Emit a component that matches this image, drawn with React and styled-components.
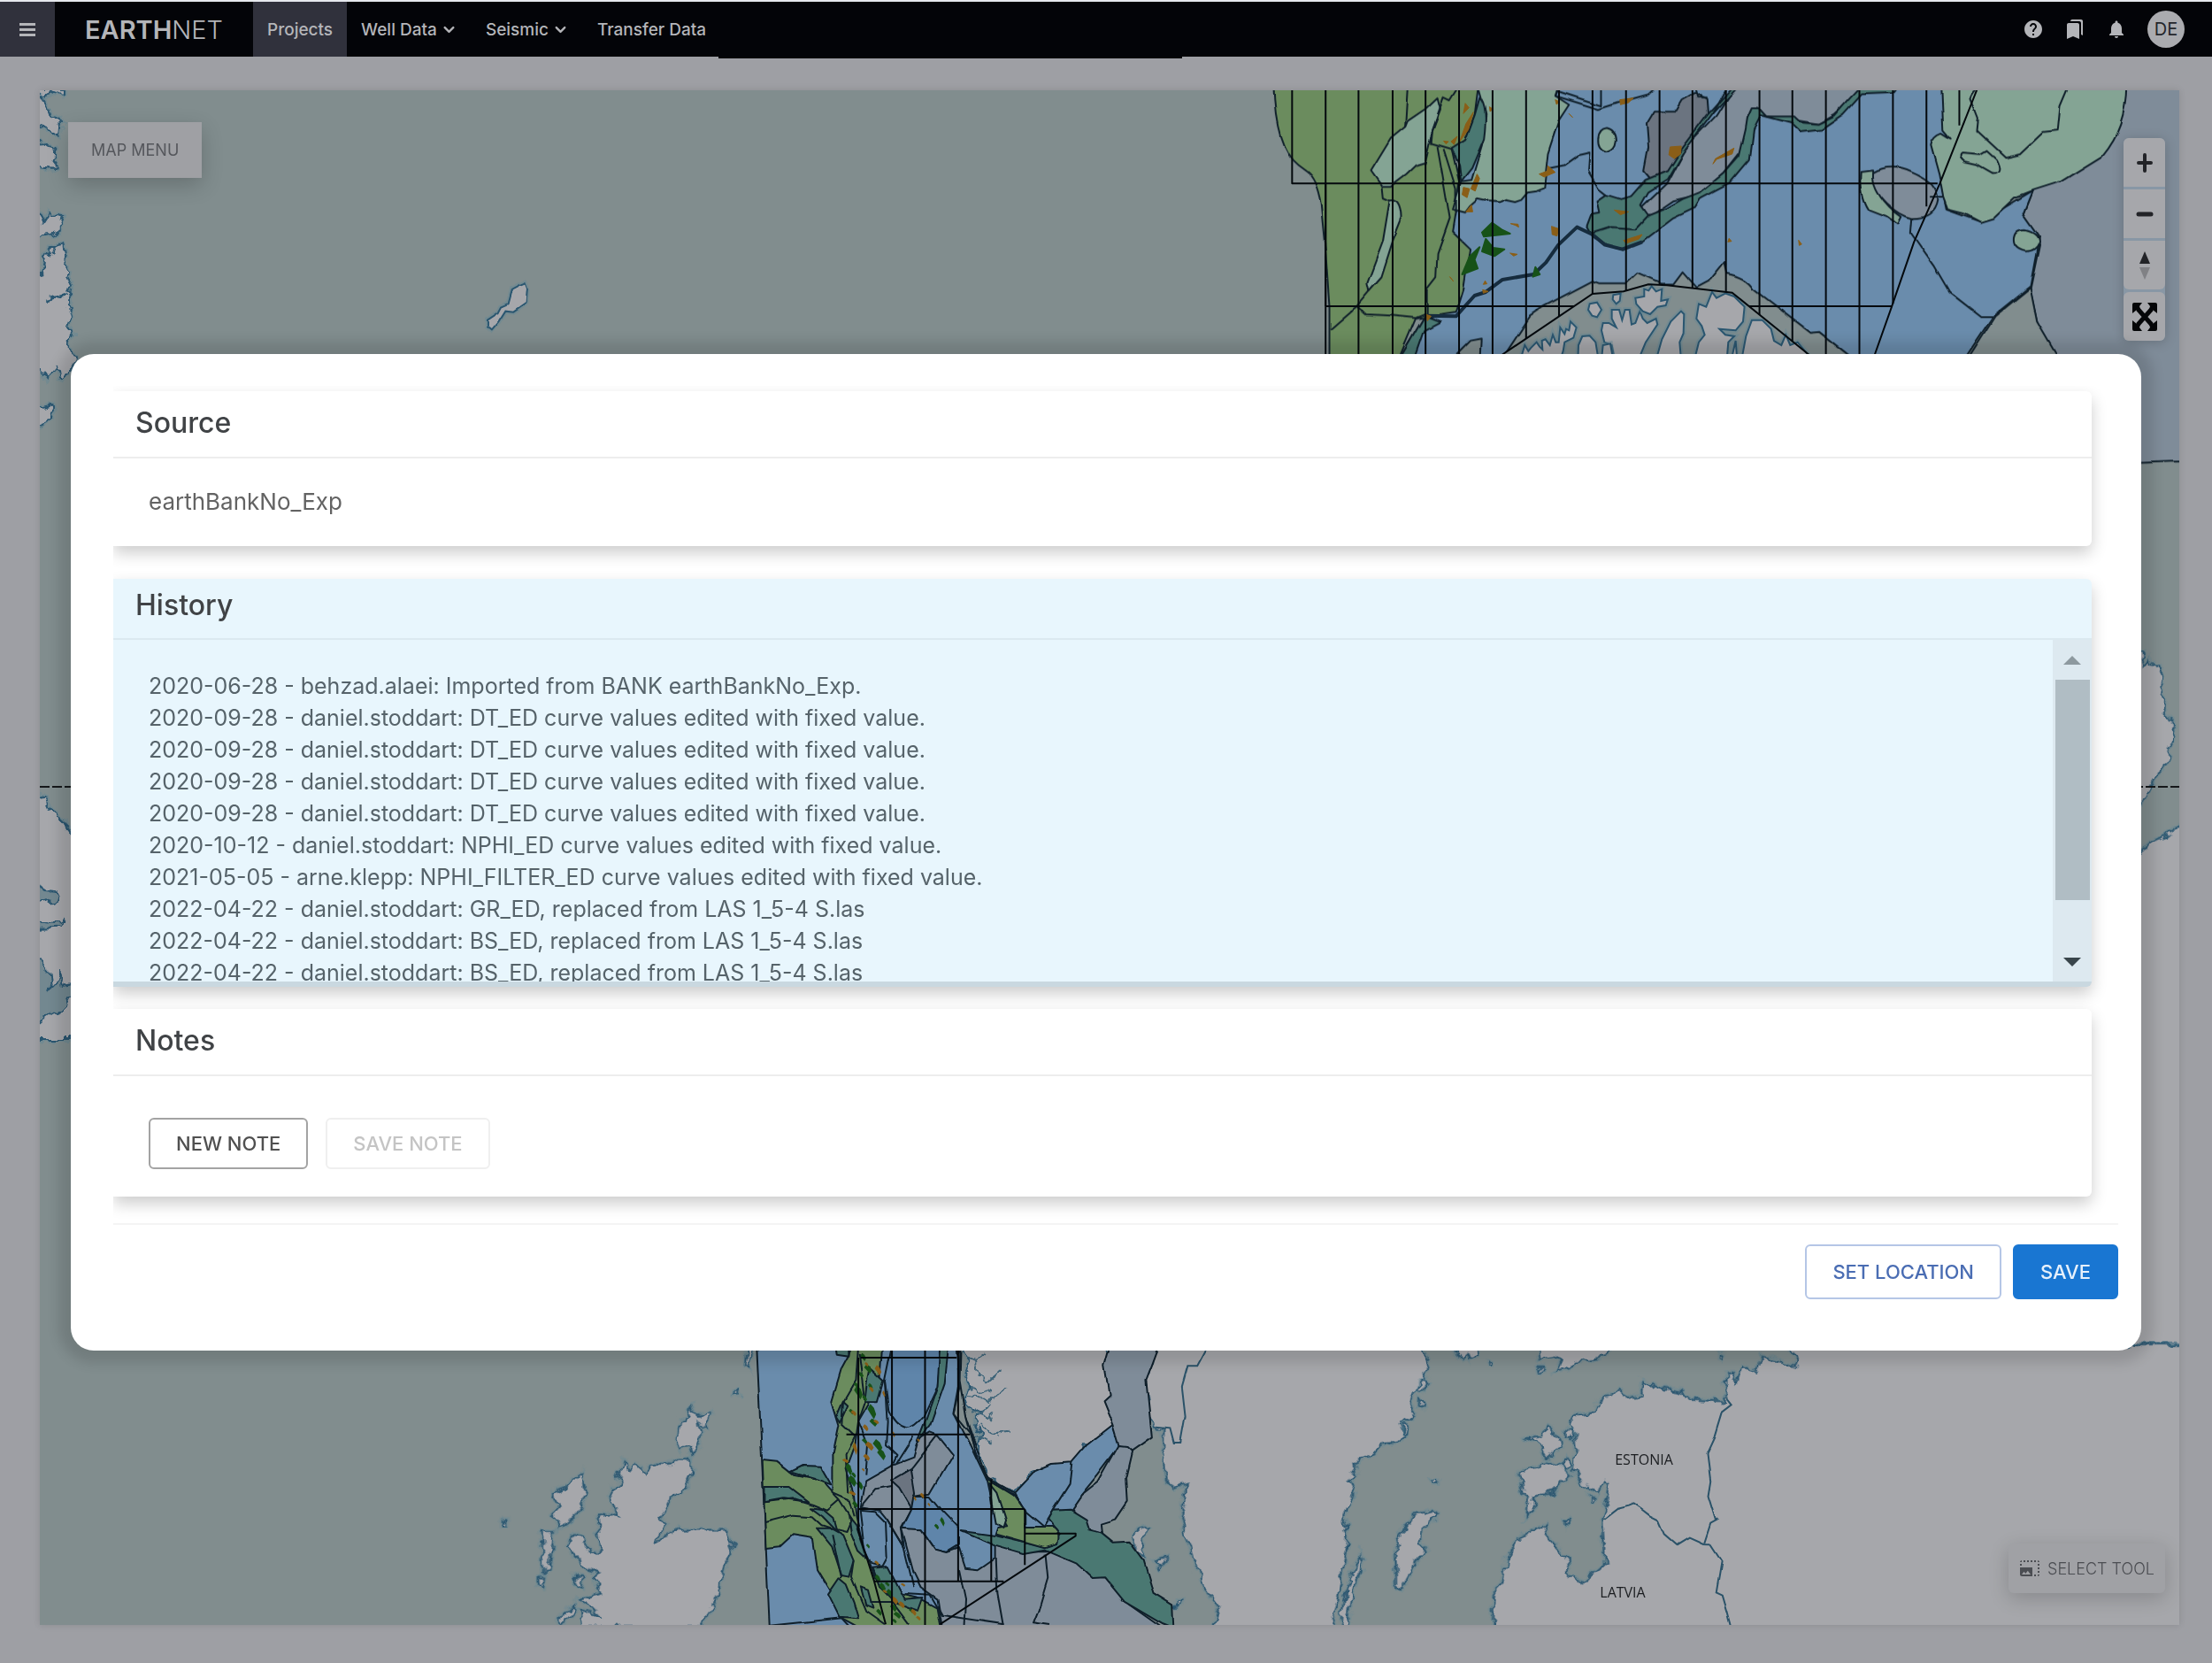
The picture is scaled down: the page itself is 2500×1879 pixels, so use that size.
import React from 'react'
import styled, { createGlobalStyle } from 'styled-components'
import {
    MdHelp,
    MdBookmarks,
    MdNotifications,
    MdPhotoSizeSelectLarge
} from 'react-icons/md'
import { FiChevronDown } from 'react-icons/fi'

const GlobalStyle = createGlobalStyle`
    * {
        box-sizing: border-box;
    }

    body {
        margin: 0;
        background: #9e9fa4;
        font-family: Inter, 'Open Sans', sans-serif;
    }

    button {
        font-family: inherit;
        cursor: pointer;
    }
`

const Page = styled.div`
    position: relative;
    display: flex;
    flex-direction: column;
    min-height: 100vh;
`

const Header = styled.header`
    position: relative;
    display: flex;
    align-items: stretch;
    height: 64px;
    border-top: 2px solid #e6e9ee;
    background: #030408;
    color: #b4b5b9;

    &::after {
        content: '';
        position: absolute;
        left: 812px;
        width: 524px;
        top: 62px;
        height: 2px;
        background: #030408;
    }
`

const BurgerButton = styled.button`
    display: flex;
    flex-direction: column;
    align-items: center;
    justify-content: center;
    gap: 3px;
    width: 62px;
    border: 0;
    background: #30313c;

    span {
        width: 18px;
        height: 3px;
        background: #b4b5b9;
    }
`

const Logo = styled.a`
    display: flex;
    align-items: center;
    justify-content: center;
    width: 224px;
    color: #b4b5b9;
    font-size: 29px;
    font-weight: 600;
    text-decoration: none;

    span {
        font-weight: 300;
    }
`

const Nav = styled.nav`
    display: flex;
    flex: 1;
`

const NavItem = styled.button`
    display: flex;
    align-items: center;
    gap: 4px;
    padding: 0 16px;
    border: 0;
    background: ${props => (props.$active ? '#30313c' : 'transparent')};
    color: #b4b5b9;
    font-size: 19px;
    font-weight: 500;

    svg {
        stroke-width: 3;
    }
`

const HeaderActions = styled.div`
    display: flex;
    align-items: center;
    gap: 23px;
    padding-right: 31px;
`

const IconButton = styled.button`
    display: flex;
    padding: 0;
    border: 0;
    background: none;
    color: #b4b5b9;
    font-size: 24px;
`

const Avatar = styled.button`
    width: 42px;
    height: 42px;
    padding: 0;
    border: 0;
    border-radius: 50%;
    background: #aaabaf;
    color: #24262b;
    font-size: 20px;
`

const Main = styled.main`
    display: flex;
    flex: 1;
    padding: 38px 37px 43px 45px;
`

const MapArea = styled.section`
    position: relative;
    flex: 1;
    overflow: hidden;
    background: #818d8e;
    box-shadow: 0 0 8px rgba(0, 0, 0, 0.12);
`

const MapDrawing = styled.svg`
    position: absolute;
    inset: 0;
    width: 100%;
    height: 100%;

    path,
    ellipse {
        vector-effect: non-scaling-stroke;
    }
`

const MapMenuButton = styled.button`
    position: absolute;
    top: 36px;
    left: 32px;
    height: 63px;
    padding: 0 26px;
    border: 0;
    background: #9fa0a4;
    color: #55575c;
    font-size: 18px;
    box-shadow: 0 8px 24px rgba(0, 0, 0, 0.2);
`

const MapControls = styled.div`
    position: absolute;
    top: 54px;
    right: 16px;
    display: flex;
    flex-direction: column;
    gap: 3px;
    border-radius: 6px;
    background: #8897a5;
    box-shadow: 0 2px 14px rgba(0, 0, 0, 0.2);
`

const MapControl = styled.button`
    display: flex;
    align-items: center;
    justify-content: center;
    width: 47px;
    height: 55px;
    padding: 0;
    border: 0;
    border-radius: ${props => props.$radius || '0'};
    background: #a6a7ab;
`

const SelectToolButton = styled.button`
    position: absolute;
    right: 16px;
    bottom: 36px;
    display: flex;
    align-items: center;
    gap: 8px;
    height: 56px;
    padding: 0 12px;
    border: 0;
    border-radius: 6px;
    background: #a0a1a5;
    color: #4b4d52;
    font-size: 18px;
    font-weight: 300;
    box-shadow: 0 6px 22px rgba(0, 0, 0, 0.18);

    svg {
        font-size: 24px;
    }
`

const Overlay = styled.div`
    position: absolute;
    inset: 0;
    padding: 400px 80px 0;
`

const Dialog = styled.div`
    padding: 36px 26px 58px 48px;
    border-radius: 26px;
    background: #fff;
    box-shadow: 0 0 14px 14px rgba(0, 0, 0, 0.12);
`

const DialogBody = styled.div`
    display: flex;
    flex-direction: column;
    overflow: hidden;
    padding: 6px 30px 30px 0;
    border-bottom: 2px solid #f4f4f4;
`

const Card = styled.section`
    margin-bottom: ${props => props.$gap || '0'};
    border-radius: 0 6px 6px 0;
    background: ${props => (props.$highlight ? '#e8f6fd' : '#fff')};
    border-bottom: ${props => (props.$highlight ? '6px solid #c9d8e0' : '0')};
    box-shadow: 0 8px 18px rgba(0, 0, 0, 0.2);
`

const CardTitle = styled.h2`
    margin: 0;
    padding: ${props => (props.$highlight ? '12px 25px 19px' : '18px 25px 20px')};
    border-bottom: 2px solid ${props => (props.$highlight ? '#dbe9f0' : '#ededed')};
    color: #404346;
    font-size: 32px;
    font-weight: 500;
    line-height: 36px;
`

const CardText = styled.p`
    margin: 0;
    padding: 31px 40px 32px;
    color: #636363;
    font-size: 26px;
    line-height: 36px;
`

const HistoryPane = styled.div`
    display: flex;
    height: 386px;
`

const HistoryList = styled.ul`
    flex: 1;
    overflow: hidden;
    margin: 0;
    padding: 34px 40px 0;
    list-style: none;
    color: #56636a;
    font-size: 25px;
    line-height: 36px;
`

const ScrollTrack = styled.div`
    display: flex;
    flex-direction: column;
    align-items: center;
    width: 44px;
    background: #dde9f0;
`

const ScrollArrow = styled.button`
    display: flex;
    align-items: center;
    justify-content: center;
    width: 40px;
    height: 45px;
    padding: 0;
    border: 0;
    background: none;
`

const ScrollThumb = styled.div`
    width: 39px;
    height: 249px;
    margin-bottom: auto;
    background: #b0bdc4;
`

const NoteActions = styled.div`
    display: flex;
    gap: 20px;
    padding: 47px 40px 31px;
`

const Button = styled.button`
    height: ${props => (props.$large ? '62px' : '58px')};
    padding: 0 29px;
    border: 2px solid ${props => props.$border || 'transparent'};
    border-radius: 6px;
    background: ${props => props.$background || '#fff'};
    color: ${props => props.$color};
    font-size: 22px;
    font-weight: 500;
`

const DialogFooter = styled.footer`
    display: flex;
    justify-content: flex-end;
    gap: 13px;
    padding-top: 22px;
`

const SEA = '#818d8e'
const LAND = '#a6a7ab'
const BLUE = '#6a8cac'
const DEEP = '#5f85aa'
const GREEN = '#6b8c5e'
const TEAL = '#4a7872'
const MINT = '#84a494'
const SLATE = '#7f8c99'
const ROCK = '#6b7480'
const INK = '#0f1f2a'
const OIL = '#175218'
const GAS = '#8a5e17'

// each sheet of the map is drawn on its own grid
const NORTH = 'translate(1400 80) scale(.7015 .3333)'
const COAST = 'translate(1640 290) scale(.3333)'
const SOUTH = 'translate(550 1500) scale(.5421 .3333)'
const BALTIC = 'translate(1280 1500) scale(.5421 .3333)'
const WEST = 'translate(40 100) scale(.3333 .7015)'
const ISLAND = 'translate(0 80) scale(.4464 .3333)'
const EAST = 'translate(2200 600) scale(.3333 .3827)'

const westLand = [
    'M0 0 L90 0 L90 12 L75 12 L50 8 L0 15Z',
    'M0 10 L15 18 L45 40 L80 48 Q88 60 80 75 L60 70 L0 60Z',
    'M0 80 L35 95 L70 98 L60 128 L0 125Z',
    'M0 190 L30 215 L50 200 L60 205 L90 205 L75 230 L50 235 L0 240Z',
    'M0 300 L25 297 L30 280 L60 255 L100 250 L105 270 L100 278 L112 290 L106 300 L120 318 L112 328 L118 345 L110 350 L120 370 L112 380 L120 400 L110 408 L122 425 L140 438 L115 460 L95 468 L80 465 L70 448 L55 452 L40 465 L25 455 L0 440Z',
    'M0 515 L50 508 L68 512 L50 535 L0 545Z',
    'M0 1134 L35 1145 L50 1162 L75 1168 L105 1195 L140 1198 L140 1531 L0 1531Z'
]

const westInlets = [
    'M0 1282 L40 1290 L75 1292 L65 1308 L0 1315Z',
    'M0 1342 L90 1345 L100 1333 L98 1352 L0 1354Z',
    'M0 1395 L45 1420 L55 1450 L75 1440 L85 1420 L92 1445 L140 1440 L110 1470 L90 1490 L60 1485 L0 1508Z',
    'M40 340 L100 335 L104 337 L42 342Z'
]

const scotland = [
    'M285 455 L300 485 L310 465 L330 490 L345 465 L380 465 L400 445 L427 450 L425 500 L410 550 L385 580 L360 640 L375 660 L345 735 L400 685 L500 685 L515 740 L497 790 L485 900 L465 960 L440 1020 L200 1020 L195 960 L235 980 L200 920 L235 900 L225 850 L240 830 L200 810 L188 770 L165 750 L185 700 L200 720 L215 760 L240 760 L230 650 L255 630 L275 640 L258 545 L275 540Z',
    'M200 485 L208 560 L185 640 L150 680 L138 640 L155 610 L140 560 L165 545Z',
    'M115 690 L140 690 L130 830 L118 835 L118 740Z',
    'M430 265 L440 300 L468 280 L460 340 L440 320 L445 380 L430 430 L425 400 L405 415 L398 385 L402 320 L420 310Z',
    'M545 60 L555 60 L548 140 L540 130Z',
    'M185 935 L185 955 L160 1000 L150 985Z',
    'M518 215 L526 215 L526 232 L518 232Z',
    'M33 652 L41 652 L41 668 L33 668Z',
    'M110 850 L120 850 L118 878 L110 872Z',
    'M180 845 L200 850 L198 878 L188 870Z'
]

const norway =
    'M985 60 L1290 60 L1310 340 L1250 400 L1220 460 L1140 490 L1100 560 L1045 500 L1020 390 L1035 360 L1015 330 L1030 290 L1000 260 L1008 200 L995 150 L1005 110Z'

const fjords =
    'M1000 100 L1020 115 L1040 90 M1020 115 L1025 160 L1045 180 L1068 150 M1005 240 L1040 245 L1085 215 M1030 290 L1050 250 M1010 280 L1050 310 L1060 280 M1025 330 L1060 360 L1088 350 M1020 370 L1045 380 L1058 398 M1010 200 L1025 230 L1048 210'

const baltic = [
    'M60 60 L25 180 L35 310 L40 340 L65 345 L65 420 L70 520 L90 545 L110 535 L110 590 L100 640 L110 700 L130 790 L150 880 L185 950 L168 1020 L168 1060 L412 1060 L412 1020 L425 930 L440 820 L450 700 L440 650 L460 560 L450 530 L465 500 L460 460 L500 430 L520 395 L545 390 L570 370 L560 330 L590 290 L575 250 L600 200 L618 140 L600 60Z',
    'M748 1060 L755 890 L775 850 L780 780 L800 715 L860 672 L865 710 L905 780 L912 850 L940 865 L985 800 L980 650 L995 530 L985 520 L965 555 L938 530 L920 480 L925 420 L918 330 L925 295 L960 285 L965 260 L985 240 L1000 235 L1015 210 L1035 235 L1060 225 L1065 185 L1080 205 L1090 195 L1105 205 L1145 215 L1165 245 L1235 250 L1240 155 L1250 155 L1260 185 L1270 135 L1300 150 L1310 98 L1385 130 L1390 105 L1370 76 L1370 60 L2300 60 L2300 1060Z',
    'M845 60 L850 105 L880 95 L895 105 L885 150 L905 145 L920 110 L985 100 L1003 60Z',
    'M660 60 L690 105 L700 90 L705 110 L722 95 L715 60Z',
    'M625 620 L635 630 L605 680 L600 730 L608 760 L590 800 L560 885 L550 870 L548 740 L570 670 L590 635Z',
    'M475 770 L480 790 L455 920 L445 1060 L430 1060 L440 920Z',
    'M825 375 L855 370 L865 338 L880 355 L893 400 L860 445 L848 400Z',
    'M808 490 L825 480 L860 460 L895 460 L913 500 L875 560 L835 570 L835 610 L822 640 L825 570 L810 555Z',
    'M898 348 L918 350 L915 372 L898 370Z',
    'M905 440 L917 465 L910 485 L895 465Z',
    'M622 515 L635 515 L635 530 L625 530Z',
    'M741 112 L751 112 L750 128 L742 128Z',
    'M847 132 L856 132 L856 145 L849 145Z',
    'M1223 92 L1231 95 L1228 110 L1222 106Z',
    'M954 572 L962 575 L960 592 L954 590Z',
    'M902 655 L910 658 L909 673 L903 672Z',
    'M44 790 L68 778 L68 792 L55 815Z',
    'M90 925 L102 922 L98 940 L90 942Z',
    'M0 700 L20 675 L32 680 L22 720 L25 780 L0 740Z',
    'M598 190 L610 195 L605 215 L596 210Z',
    'M600 245 L608 250 L606 268 L599 264Z',
    'M568 330 L576 335 L572 362 L566 358Z'
]

const borders = [
    'M158 60 L135 130 L115 130 L103 200 L110 300 L100 390 L88 390 L80 340 L50 335',
    'M982 650 L1010 615 L1035 605 L1045 598 L1060 615 L1080 640 L1098 655 L1110 700 L1135 735 L1160 710 L1190 732 L1205 733',
    'M1238 240 L1250 265 L1230 290 L1215 370 L1198 430 L1205 520 L1200 570 L1215 650 L1222 650 L1205 665 L1192 730',
    'M1205 733 L1228 790 L1217 895 L1230 905 L1240 960 L1250 1020'
]

const eastLand = [
    'M600 355 L660 355 L670 395 L685 378 L705 405 L720 402 L735 430 L725 480 L745 500 L740 550 L765 555 L772 590 L760 630 L755 670 L695 745 L655 805 L600 810Z',
    'M600 1000 L655 970 L690 915 L740 900 L770 885 L850 840 L850 2400 L600 2400Z'
]

const northZones = [
    [SLATE, 'M1132 50 L1700 50 L1700 1320 L1500 1325 L1440 1330 L1330 1100 L1286 850 L1275 740 L1290 590 L1265 485 L1280 405Z'],
    [BLUE, 'M384 50 L1132 50 L1145 230 L1130 370 L1140 470 L1195 512 L1280 405 L1265 485 L1290 560 L1275 730 L1215 832 L1165 990 L255 990 L300 830Z'],
    [SEA, 'M1275 735 L1218 832 L1170 990 L1325 990 L1286 850Z'],
    [SLATE, 'M800 50 L770 150 L720 260 L690 380 L650 460 Q650 490 665 490 L700 440 L740 420 L780 350 L810 270 L822 150 L835 125 L850 155 L890 165 L935 180 L960 150 L990 90 L1005 50Z'],
    [ROCK, 'M735 75 L715 100 L705 135 L670 135 L657 180 L660 260 L653 340 L665 370 L690 345 L720 260 L757 150 L755 95Z'],
    [TEAL, 'M798 50 L755 150 L705 290 L690 340 L655 370 L632 425 L615 435 L592 420 L578 440 L582 480 L570 485 L562 530 L570 560 L590 595 L618 608 L650 580 L700 500 L735 465 L745 430 L790 380 L822 300 L828 200 L840 150 L890 178 L905 208 L940 200 L975 150 L1005 80 L1055 75 L1064 50 L1005 50 L985 95 L960 155 L935 180 L905 175 L895 155 L850 155 L838 127 L825 127 L818 160 L815 200 L805 290 L780 350 L745 410 L715 435 L690 465 L660 490 L648 455 L660 410 L690 370 L715 280 L765 140 L805 50Z'],
    [GREEN, 'M56 50 C58 190 70 280 95 320 L108 340 C122 360 128 400 132 450 L140 620 L146 800 L146 990 L255 990 L285 840 L350 820 L362 740 L372 600 L345 545 L350 480 L355 375 L343 265 L365 235 L380 150 L386 50Z'],
    [MINT, 'M384 50 L390 95 L398 150 L392 250 L375 370 L358 375 L345 470 L365 480 L372 460 L385 435 L400 442 L420 445 L430 435 L445 442 L455 435 L465 410 L480 405 L492 395 L498 280 L515 170 L532 115 L510 85 L515 50Z'],
    [MINT, 'M320 90 L325 130 L312 200 L300 310 L285 320 L270 350 L245 390 L230 390 L213 340 L245 230 L268 190 L272 170 L300 130Z'],
    [MINT, 'M243 440 Q262 430 263 500 L248 580 L230 700 L210 748 L207 720 L232 580Z'],
    [TEAL, 'M388 92 Q402 120 395 230 L375 330 L358 375 L355 320 L343 265 L365 235 L380 150Z'],
    [TEAL, 'M300 830 L325 850 L298 880 L280 990 L255 990Z'],
    [MINT, 'M593 194 Q607 200 607 235 Q605 270 592 273 Q578 265 579 230 Q580 197 593 194Z'],
    [MINT, 'M1132 50 L1135 200 L1147 230 L1132 210 Q1118 220 1115 250 L1128 350 L1135 430 L1142 470 L1170 485 L1195 513 L1215 500 L1250 430 L1280 405 L1325 375 L1390 290 Q1430 190 1430 50Z'],
    [MINT, 'M1268 540 Q1290 550 1290 580 Q1285 615 1268 615 Q1248 605 1250 570 Q1252 540 1268 540Z'],
    [MINT, 'M1003 340 L1022 335 Q1022 430 1068 495 L1062 520 L1045 495 L1015 470 Q1000 420 1003 340Z'],
    [SLATE, 'M1022 345 Q1050 310 1085 345 Q1125 380 1125 440 Q1120 500 1085 500 Q1065 490 1045 450 Q1020 400 1022 345Z'],
    [SEA, 'M420 990 L470 830 L492 798 L570 712 L580 720 L625 720 L642 687 L680 722 L700 722 L715 680 L738 735 L760 710 L783 650 L787 687 Q820 700 830 740 L920 885 L935 882 L1000 990Z'],
    [SEA, 'M350 962 L372 915 L390 908 L388 990Z']
]

const northLines = [
    'M1195 50 Q1180 70 1178 95 L1190 160 L1188 200 L1235 292 L1260 280 L1295 210 L1318 205 L1322 120 L1336 50',
    'M1165 280 L1195 285 L1205 272 L1220 300 Q1232 350 1215 350 L1190 320 L1170 310 Q1158 290 1165 280Z',
    'M1085 500 L1083 550 L1120 660 L1145 750 L1195 832 L1218 832',
    'M1112 430 L1135 430',
    'M515 62 L510 85 L580 130 L625 100 L660 80 L675 50 M565 50 L585 60 L585 118 L515 70',
    'M500 330 L525 320 L545 290 L565 280 L563 340 L580 400 L592 420 M570 550 L600 530 L640 535 L660 490',
    'M272 50 L268 190 M355 50 L340 100 L330 90 L312 200 L310 245 L343 265 M320 255 L328 350 L340 500 L320 620 L318 700 L303 740 L303 830 M330 265 L350 400 L350 480',
    'M148 875 L190 798 L210 748 M190 798 L205 825 L245 830 L285 838 L300 825 M230 390 L232 430 L243 440',
    'M735 50 L740 90 L755 90 M788 50 L765 140'
]

const coastLand = [
    'M235 350 L250 300 L262 320 L270 310 L290 290 L300 305 L310 315 L308 285 L320 280 L335 300 L345 265 L355 290 L365 290 L370 240 L385 262 L390 245 L400 250 L405 220 L425 240 L415 275 L385 290 L380 320 L370 350Z',
    'M430 350 L432 300 L445 270 L470 268 L490 290 L500 350Z',
    'M520 290 L510 250 L515 225 L535 225 L560 240 L545 210 L545 180 L570 180 L580 215 L590 180 L605 180 L612 230 L625 225 L640 185 L650 210 L665 225 L695 210 L700 230 L660 290 L635 350 L555 350 L545 300Z',
    'M625 140 L655 135 L655 110 L670 115 L680 100 L695 118 L715 110 L712 150 L735 145 L728 165 L700 170 L675 195 L650 185 L628 160Z',
    'M695 350 L715 280 L745 220 L780 185 L790 195 L788 260 L775 290 L780 350Z',
    'M825 350 L840 290 L860 265 L850 235 L832 210 L840 160 L865 170 L885 120 L900 140 L930 125 L960 135 L995 170 L990 220 L965 250 L910 245 L930 265 L960 270 L940 290 L935 350Z',
    'M950 350 L965 285 L970 350Z',
    'M985 350 L1000 270 L1020 215 L1055 215 L1085 245 L1095 285 L1120 300 L1135 265 L1150 300 L1175 290 L1225 350Z',
    'M470 160 L495 155 L510 180 L495 205 L478 200 L465 180Z',
    'M550 130 L575 125 L572 150 L560 160 L548 145Z',
    'M510 350 L515 300 L540 295 L550 350Z'
]

const northGrid = [
    'M86 50 V382 H1126 M140 382 V798 M140 798 H545 M818 798 H1052',
    'M140 50 V990 M193 50 V962 M248 50 V962 M301 50 V962 M355 50 V962 M409 50 V962 M463 50 V915 M516 50 V845',
    'M570 50 V757 M624 50 V748 M678 50 V726 M731 50 V738 M785 50 V750 M839 50 V830 M892 50 V915 M946 50 V962',
    'M1000 50 V962 M1054 50 V790 M1108 50 V460 M1161 50 V185',
    'M1192 50 L1130 380 L1088 580 L1052 800 L1020 990'
]

const southZones = [
    [BLUE, 'M563 60 L985 60 L985 230 L1008 340 L1045 510 L1100 560 L1120 610 L1230 700 L1170 850 L1140 1020 L590 1020Z'],
    [SEA, 'M980 60 L990 60 L988 180 L1000 300 L1020 420 L1045 520 L1010 400 L975 290 L988 200Z'],
    [DEEP, 'M845 60 L948 60 L940 200 L910 305 Q890 345 875 343 Q850 330 838 280 L830 180Z'],
    [SLATE, 'M780 610 L790 520 L850 465 L890 440 L900 380 L925 355 L940 365 L972 430 L925 560 L890 570 L885 620 L865 680 L870 745 L835 650 L820 620Z'],
    [ROCK, 'M843 520 L885 480 L893 560 L885 615 L860 545Z'],
    [DEEP, 'M890 570 L925 570 L950 620 L985 680 L985 740 L960 765 L935 755 L905 685 L865 685 L885 620Z'],
    [SLATE, 'M865 680 L905 685 L935 755 L960 765 L985 750 L998 815 L1025 820 L1060 780 L1060 740 L1120 760 L1200 760 L1290 850 L1340 940 L1410 1020 L950 1020 L940 920 L905 880 L890 830Z'],
    [BLUE, 'M1100 560 L1140 490 L1180 462 L1220 457 L1250 400 L1305 330 L1320 402 L1275 500 L1240 570 L1220 620 L1180 620 L1160 675 L1120 620Z'],
    [SLATE, 'M1300 60 L1288 130 L1298 230 L1285 250 L1305 330 L1318 402 L1345 418 L1387 370 L1375 180 L1387 130 L1403 60Z'],
    [SLATE, 'M1318 402 L1335 405 L1345 420 L1332 510 L1335 590 L1310 650 L1280 665 L1282 695 L1250 680 L1220 617 L1240 570 L1275 525Z'],
    [TEAL, 'M1170 650 L1180 620 L1215 617 L1248 650 L1255 685 L1280 695 L1305 728 L1340 725 L1370 790 L1390 900 L1430 940 L1432 1020 L1410 1006 L1330 930 L1290 850 L1265 852 L1230 800 L1165 755 L1120 768 L1060 740 L990 690 L1060 705 L1165 745 L1195 700Z'],
    [GREEN, 'M1045 515 L1098 565 L1122 620 L1122 675 L1180 675 Q1198 690 1190 735 L1165 748 L1060 700 L1065 675 L1085 670 L1055 590Z'],
    [MINT, 'M1050 530 L1065 560 L1083 650 L1078 675 L1062 660 L1055 600Z'],
    [GREEN, 'M760 60 L825 60 L820 170 L800 250 L775 320 L768 400 L750 480 L765 560 L770 640 L785 740 L810 850 L860 900 L900 915 L940 950 L948 1020 L780 1020 L735 980 L720 900 L690 820 L680 710 L640 700 L610 745 L582 750 L575 450 L605 455 L640 500 L700 520 L722 560 L722 430 L735 330 L720 250 L740 140 L755 95Z'],
    [TEAL, 'M632 490 L660 468 L695 470 L718 535 L680 512Z'],
    [TEAL, 'M580 540 L630 540 L670 590 L620 580 L580 592Z'],
    [TEAL, 'M675 610 L700 615 L722 645 L730 690 L700 640Z'],
    [TEAL, 'M690 680 L720 680 L742 700 L765 790 L755 845 L740 840 L720 740Z'],
    [TEAL, 'M712 905 L735 850 L750 870 L765 930 L775 985 L735 980Z'],
    [TEAL, 'M800 140 L827 180 L815 250 L790 250 L795 180Z'],
    [TEAL, 'M745 245 L755 260 L738 320 L730 300Z'],
    [TEAL, 'M755 640 L770 670 L795 790 L775 760 L760 700Z'],
    [TEAL, 'M805 815 L835 810 L870 920 L910 915 L900 960 L850 930 L820 880Z'],
    [TEAL, 'M780 880 L795 890 L805 950 L790 940Z'],
    [TEAL, 'M727 60 H755 V98 L730 92Z'],
    [TEAL, 'M945 60 L963 60 L955 190 L925 330 L895 400 L912 330 L940 200Z'],
    [BLUE, 'M778 620 L810 625 L832 660 L835 780 L825 810 L800 800 L788 760Z'],
    [BLUE, 'M740 985 L760 1020 L590 1020 L590 1010Z']
]

const southLines = [
    'M580 660 L640 635 L680 640 L700 670 L720 680 M580 592 L640 580 L680 600 L710 620 L735 585 L720 560 L755 585 L765 640 M735 585 L760 650 L750 690 L725 680',
    'M775 60 L770 180 L745 250 L742 330 L768 370 L750 430 L755 560 M778 90 L790 250 L775 320 L795 400 L790 500',
    'M830 180 L835 320 L832 400 L855 435 L845 470 M855 460 L890 370',
    'M780 610 L810 550 L845 540 M835 650 L870 745 L890 880 M940 365 L890 470 L885 480',
    'M985 820 L998 920 L995 1020 M1062 780 L1065 900 L1078 1020 M1165 770 L1170 850 L1150 960 L1140 1000 L1175 1008',
    'M720 700 L740 850 M765 790 L760 845 L790 960 L830 1006 M800 930 L845 930 L880 1006',
    'M988 60 L985 200 L975 290 L1010 360 L1025 450 L1050 520 L1100 570',
    'M1220 457 L1215 530 L1180 620 M870 900 L925 905 L950 975 L1078 1006'
]

const southGrid = [
    'M775 102 V690 M845 60 V1020 M914 60 V1020 M983 60 V860 M1052 515 V860 M1122 615 V805',
    'M780 102 H980 M750 362 H1008 M775 615 H1122 M808 860 H1078 M1122 698 H1228 V706 L945 1006',
    'M775 690 L808 860 L832 1006'
]

const southOil = [
    [785, 100, 6, 14], [795, 140, 8, 16], [775, 220, 9, 24], [800, 200, 5, 12], [803, 285, 9, 26],
    [806, 322, 8, 14], [815, 400, 10, 22], [823, 430, 9, 20], [755, 480, 7, 22], [762, 520, 9, 20],
    [778, 535, 7, 16], [788, 385, 6, 10], [768, 600, 6, 12], [795, 741, 4, 8], [938, 675, 5, 10],
    [950, 658, 5, 16], [815, 850, 6, 14], [825, 880, 7, 16], [840, 900, 7, 14], [818, 965, 6, 12],
    [848, 950, 7, 14], [856, 975, 8, 12], [780, 160, 6, 10], [760, 285, 5, 10], [885, 960, 5, 8],
    [770, 195, 5, 10], [788, 240, 5, 12], [765, 500, 5, 10], [835, 870, 5, 8], [850, 995, 5, 8]
]

const southGas = [
    [816, 145, 7, 18], [802, 210, 5, 10], [828, 225, 3, 12], [765, 290, 6, 10], [790, 340, 6, 12],
    [798, 402, 9, 16], [792, 440, 7, 12], [748, 452, 7, 8], [762, 562, 8, 8], [848, 362, 4, 10],
    [900, 382, 3, 6], [785, 482, 3, 6], [908, 570, 5, 10], [893, 580, 3, 8], [922, 600, 3, 6],
    [813, 798, 5, 8], [868, 872, 5, 6], [850, 925, 8, 14], [865, 940, 7, 12], [890, 965, 6, 12],
    [900, 985, 5, 8], [830, 895, 5, 6], [812, 320, 6, 8], [768, 410, 5, 22], [792, 125, 4, 8]
]

const northOil =
    'M408 515 L425 540 L437 552 L395 562 L392 548Z M398 570 L410 600 L428 605 L412 628 L392 612Z M388 598 L380 640 L385 670 L360 690 L372 630Z M478 665 L485 690 L474 698Z'

const northGas =
    'M365 110 L371 125 L362 145Z M378 140 L370 200 L356 240 L366 180Z M352 222 L347 250 L342 240Z M330 238 L338 240 L334 248Z M404 122 L410 130 L405 138Z M510 98 L517 105 L512 114Z M532 145 L538 158Z M614 98 L636 92 L628 108 L615 115Z M695 258 L713 255 L712 282 L702 298 L693 285Z M798 262 L795 282 L770 300 L764 316 L768 298Z M498 322 L510 344 L492 360 L484 350 L497 340Z M384 350 L388 365 L381 408 L374 400Z M362 395 L372 400 L368 430 L360 420Z M375 455 L377 478 L366 478Z M438 518 L450 520 L451 530 L446 524Z M504 527 L515 535 L513 560 L505 555Z M605 472 L628 478 L615 488Z M620 575 L650 555 L645 570 L624 585Z M790 568 L794 578 L788 580Z M902 574 L907 588 L903 592Z M437 618 L449 622 L443 628Z M340 698 L346 714Z M397 712 L400 722 L394 724Z M393 742 L402 748 L394 754Z M302 826 L310 832 L304 848Z'

const Coastline = ({ paths, transform }) => (
    <g transform={transform}>
        {paths.map(d => (
            <g key={d}>
                <path d={d} fill="none" stroke="#5f8796" strokeWidth="6" strokeOpacity=".4" />
                <path d={d} fill={LAND} stroke="#2a5670" strokeWidth="2" />
            </g>
        ))}
    </g>
)

const Zones = ({ zones, lines, grid, transform }) => (
    <g transform={transform} strokeLinejoin="round">
        {zones.map(([fill, d]) => (
            <path key={d} d={d} fill={fill} stroke={INK} strokeWidth="2" />
        ))}
        {lines.map(d => (
            <path key={d} d={d} fill="none" stroke={INK} strokeWidth="2" />
        ))}
        {grid.map(d => (
            <path key={d} d={d} fill="none" stroke="#04090d" strokeWidth="2" />
        ))}
    </g>
)

const Fields = ({ items, fill }) =>
    items.map(([x, y, rx, ry]) => (
        <path
            key={`${x}-${y}`}
            d={`M${x - rx} ${y - ry / 3} L${x - rx / 3} ${y - ry} L${x + rx / 2} ${y - ry / 2} L${x + rx} ${y + ry / 3} L${x + rx / 2} ${y + ry} L${x - rx / 4} ${y + ry / 3}Z`}
            fill={fill}
        />
    ))

const NorthSeaMap = () => (
    <MapDrawing viewBox="45 102 2418 1734" preserveAspectRatio="none" aria-hidden="true">
        <defs>
            <filter id="rough" filterUnits="userSpaceOnUse" x="0" y="60" width="2520" height="1820" colorInterpolationFilters="sRGB">
                <feTurbulence type="fractalNoise" baseFrequency=".07" numOctaves="3" seed="4" />
                <feDisplacementMap in="SourceGraphic" scale="14" xChannelSelector="R" yChannelSelector="G" />
            </filter>
            <filter id="wavy" filterUnits="userSpaceOnUse" x="0" y="60" width="2520" height="1820" colorInterpolationFilters="sRGB">
                <feTurbulence type="fractalNoise" baseFrequency=".03" numOctaves="1" seed="9" />
                <feDisplacementMap in="SourceGraphic" scale="7" xChannelSelector="R" yChannelSelector="G" />
            </filter>
        </defs>
        <rect x="0" y="60" width="2520" height="1820" fill={SEA} />
        <g filter="url(#rough)">
            <Coastline paths={westLand} transform={WEST} />
            <g transform={WEST}>
                {westInlets.map(d => (
                    <path key={d} d={d} fill="#738890" stroke="#2a5670" strokeWidth="2" />
                ))}
            </g>
            <Coastline paths={scotland} transform={SOUTH} />
            <Coastline paths={[norway]} transform={SOUTH} />
            <g transform={SOUTH}>
                <path d={fjords} fill="none" stroke="#3f6579" strokeWidth="2" />
            </g>
            <Coastline paths={eastLand} transform={EAST} />
            <Coastline paths={baltic} transform={BALTIC} />
        </g>
        <g filter="url(#wavy)">
            <Coastline
                transform={ISLAND}
                paths={['M1330 718 L1335 735 L1332 785 L1300 815 L1280 812 L1262 850 L1243 880 L1232 868 L1232 845 L1260 820 L1268 800 L1285 790 L1295 740 L1312 728Z']}
            />
            <g transform={BALTIC}>
                {borders.map(d => (
                    <path key={d} d={d} fill="none" stroke="#2a5268" strokeWidth="2" />
                ))}
            </g>
            <Zones zones={northZones} lines={northLines} grid={[]} transform={NORTH} />
            <Zones zones={southZones} lines={southLines} grid={[]} transform={SOUTH} />
        </g>
        <g transform={NORTH} strokeLinejoin="round">
            <path
                d="M300 830 L350 832 L380 762 L398 750 L425 708 L475 690 L495 650 L515 590 L545 530 L570 555 L590 590 L618 605 L650 580"
                fill="none"
                stroke="#162c3e"
                strokeWidth="4"
            />
            <path d={northOil} fill={OIL} stroke={OIL} strokeWidth="2" />
            <path d={northGas} fill={GAS} stroke={GAS} strokeWidth="1" />
        </g>
        <g transform={SOUTH}>
            <Fields items={southOil} fill={OIL} />
            <Fields items={southGas} fill={GAS} />
        </g>
        <Zones zones={[]} lines={[]} grid={northGrid} transform={NORTH} />
        <Zones zones={[]} lines={[]} grid={southGrid} transform={SOUTH} />
        <g transform={NORTH}>
            <path d="M405 990 L570 756 L620 748 L660 724 L690 727 L795 752 L935 990Z" fill={SEA} />
        </g>
        <Coastline paths={coastLand} transform={COAST} />
        <g transform={NORTH}>
            <path
                d="M405 990 L570 756 L620 748 L660 724 L690 727 L795 752 L935 990"
                fill="none"
                stroke="#04090d"
                strokeWidth="2"
            />
        </g>
        <path d="M45 889 H2463" stroke="#15181a" strokeWidth="2" strokeDasharray="11 3" />
        <g fill="#1b1d20" fontFamily="'Liberation Sans Narrow', 'Open Sans', sans-serif" fontSize="16" textAnchor="middle">
            <text x="1858" y="1655">ESTONIA</text>
            <text x="1834" y="1805">LATVIA</text>
        </g>
    </MapDrawing>
)

const history = [
    '2020-06-28 - behzad.alaei: Imported from BANK earthBankNo_Exp.',
    '2020-09-28 - daniel.stoddart: DT_ED curve values edited with fixed value.',
    '2020-09-28 - daniel.stoddart: DT_ED curve values edited with fixed value.',
    '2020-09-28 - daniel.stoddart: DT_ED curve values edited with fixed value.',
    '2020-09-28 - daniel.stoddart: DT_ED curve values edited with fixed value.',
    '2020-10-12 - daniel.stoddart: NPHI_ED curve values edited with fixed value.',
    '2021-05-05 - arne.klepp: NPHI_FILTER_ED curve values edited with fixed value.',
    '2022-04-22 - daniel.stoddart: GR_ED, replaced from LAS 1_5-4 S.las',
    '2022-04-22 - daniel.stoddart: BS_ED, replaced from LAS 1_5-4 S.las',
    '2022-04-22 - daniel.stoddart: BS_ED, replaced from LAS 1_5-4 S.las'
]

const TopBar = () => (
    <Header>
        <BurgerButton aria-label="Menu">
            <span />
            <span />
            <span />
        </BurgerButton>
        <Logo href="#">
            EARTH<span>NET</span>
        </Logo>
        <Nav>
            <NavItem $active>Projects</NavItem>
            <NavItem>Well Data <FiChevronDown /></NavItem>
            <NavItem>Seismic <FiChevronDown /></NavItem>
            <NavItem>Transfer Data</NavItem>
        </Nav>
        <HeaderActions>
            <IconButton aria-label="Help"><MdHelp /></IconButton>
            <IconButton aria-label="Bookmarks"><MdBookmarks /></IconButton>
            <IconButton aria-label="Notifications"><MdNotifications /></IconButton>
            <Avatar>DE</Avatar>
        </HeaderActions>
    </Header>
)

const Controls = () => (
    <MapControls>
        <MapControl aria-label="Zoom in" $radius="6px 6px 0 0">
            <svg width="20" height="22" viewBox="0 0 20 22" stroke="#222327" strokeWidth="4" strokeLinecap="round">
                <path d="M3 11 H17 M10 2 V20" />
            </svg>
        </MapControl>
        <MapControl aria-label="Zoom out">
            <svg width="20" height="22" viewBox="0 0 20 22" stroke="#222327" strokeWidth="5" strokeLinecap="round">
                <path d="M3 11 H17" />
            </svg>
        </MapControl>
        <MapControl aria-label="Reset bearing" $radius="0 0 6px 6px">
            <svg width="14" height="34" viewBox="0 0 14 34">
                <path d="M7 1 L13 15 H1Z" fill="#222327" />
                <path d="M1 19 H13 L7 33Z" fill="#808185" />
            </svg>
        </MapControl>
        <MapControl aria-label="Full screen" $radius="6px">
            <svg width="30" height="34" viewBox="0 0 30 34">
                <path d="M7 8 L23 26 M23 8 L7 26" stroke="#050608" strokeWidth="5" />
                <path
                    d="M1 13 V3 Q1 1 3 1 H12 L9 5 L10 9 L6 9Z M29 13 V3 Q29 1 27 1 H18 L21 5 L20 9 L24 9Z M1 21 V31 Q1 33 3 33 H12 L9 29 L10 25 L6 25Z M29 21 V31 Q29 33 27 33 H18 L21 29 L20 25 L24 25Z"
                    fill="#050608"
                />
            </svg>
        </MapControl>
    </MapControls>
)

const CurveDialog = () => (
    <Dialog role="dialog" aria-label="Curve details">
        <DialogBody>
            <Card $gap="37px">
                <CardTitle>Source</CardTitle>
                <CardText>earthBankNo_Exp</CardText>
            </Card>
            <Card $highlight $gap="25px">
                <CardTitle $highlight>History</CardTitle>
                <HistoryPane>
                    <HistoryList>
                        {history.map((entry, i) => <li key={i}>{entry}</li>)}
                    </HistoryList>
                    <ScrollTrack>
                        <ScrollArrow aria-label="Scroll up">
                            <svg width="20" height="10" viewBox="0 0 20 10"><path d="M0 10 L10 0 L20 10Z" fill="#8d999f" /></svg>
                        </ScrollArrow>
                        <ScrollThumb />
                        <ScrollArrow aria-label="Scroll down">
                            <svg width="20" height="10" viewBox="0 0 20 10"><path d="M0 0 L10 10 L20 0Z" fill="#39454b" /></svg>
                        </ScrollArrow>
                    </ScrollTrack>
                </HistoryPane>
            </Card>
            <Card>
                <CardTitle>Notes</CardTitle>
                <NoteActions>
                    <Button $color="#505050" $border="#a3a3a3">NEW NOTE</Button>
                    <Button $color="#c4c4c4" $border="#efefef" disabled>SAVE NOTE</Button>
                </NoteActions>
            </Card>
        </DialogBody>
        <DialogFooter>
            <Button $large $color="#4a6db3" $border="#b5c6e6">SET LOCATION</Button>
            <Button $large $color="#e6f0fb" $border="#1976d2" $background="#1976d2">SAVE</Button>
        </DialogFooter>
    </Dialog>
)

const App = () => (
    <Page>
        <GlobalStyle />
        <TopBar />
        <Main>
            <MapArea>
                <NorthSeaMap />
                <MapMenuButton>MAP MENU</MapMenuButton>
                <Controls />
                <SelectToolButton>
                    <MdPhotoSizeSelectLarge />
                    SELECT TOOL
                </SelectToolButton>
            </MapArea>
        </Main>
        <Overlay>
            <CurveDialog />
        </Overlay>
    </Page>
)

export default App
